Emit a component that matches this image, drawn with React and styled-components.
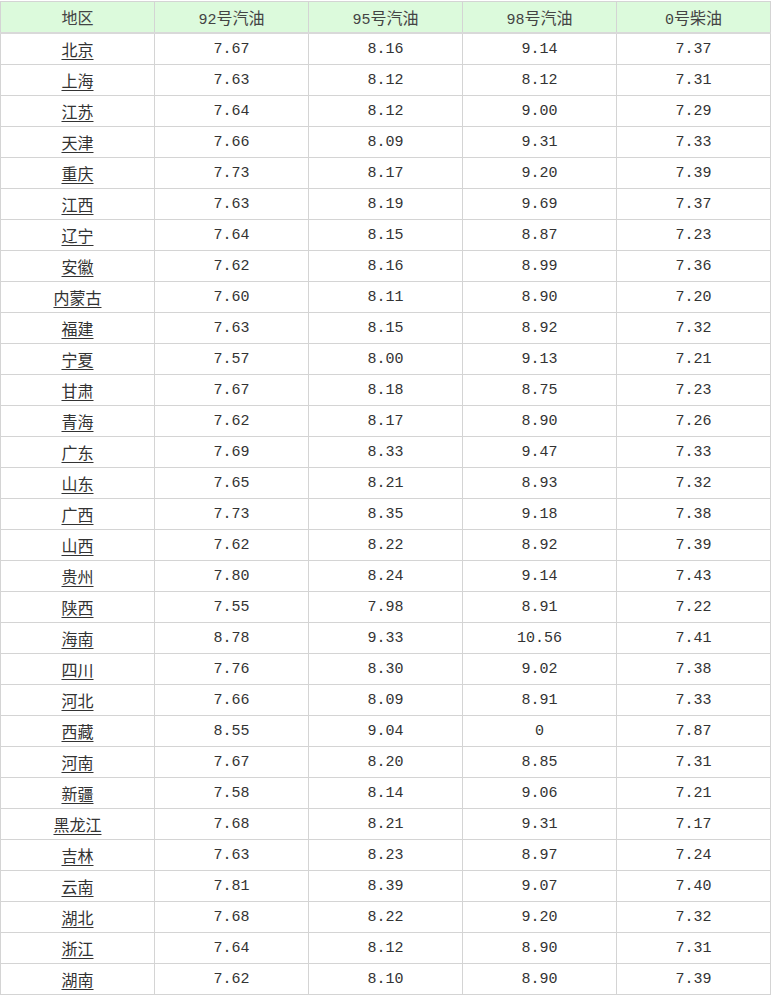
import React from 'react';
import styled, { createGlobalStyle } from 'styled-components';

const GlobalStyle = createGlobalStyle`
  body {
    margin: 0;
    padding: 1px 0 0 0;
    background: #fff;
  }
`;

const Table = styled.table`
  width: 771px;
  border-collapse: collapse;
  table-layout: fixed;
  font-family: "Liberation Serif", "Noto Sans CJK SC", serif;
  color: #333;
`;

const HeadCell = styled.th`
  height: 30px;
  padding: 0;
  background-color: #dcfadc;
  border: 1px solid #d4d4d4;
  border-bottom: 2px solid #d9d9d9;
  font-weight: normal;
  font-size: 16px;
  color: #444;
  text-align: center;
`;

const HeadNum = styled.span`
  font-family: "Liberation Mono", monospace;
  font-size: 15px;
`;

const Cell = styled.td`
  height: 30px;
  padding: 0;
  border: 1px solid #d4d4d4;
  text-align: center;
  font-size: ${props => (props.num ? '15px' : '16px')};
  font-family: ${props =>
    props.num ? '"Liberation Mono", monospace' : '"Noto Sans CJK SC", sans-serif'};
`;

const RegionLink = styled.a`
  color: #333;
  text-decoration: underline;
  text-underline-offset: 3px;
  font-family: "Noto Sans CJK SC", sans-serif;
  font-size: 16px;
`;

const headers = ['92', '95', '98', '0'];

const rows = [
  ['北京', '7.67', '8.16', '9.14', '7.37'],
  ['上海', '7.63', '8.12', '8.12', '7.31'],
  ['江苏', '7.64', '8.12', '9.00', '7.29'],
  ['天津', '7.66', '8.09', '9.31', '7.33'],
  ['重庆', '7.73', '8.17', '9.20', '7.39'],
  ['江西', '7.63', '8.19', '9.69', '7.37'],
  ['辽宁', '7.64', '8.15', '8.87', '7.23'],
  ['安徽', '7.62', '8.16', '8.99', '7.36'],
  ['内蒙古', '7.60', '8.11', '8.90', '7.20'],
  ['福建', '7.63', '8.15', '8.92', '7.32'],
  ['宁夏', '7.57', '8.00', '9.13', '7.21'],
  ['甘肃', '7.67', '8.18', '8.75', '7.23'],
  ['青海', '7.62', '8.17', '8.90', '7.26'],
  ['广东', '7.69', '8.33', '9.47', '7.33'],
  ['山东', '7.65', '8.21', '8.93', '7.32'],
  ['广西', '7.73', '8.35', '9.18', '7.38'],
  ['山西', '7.62', '8.22', '8.92', '7.39'],
  ['贵州', '7.80', '8.24', '9.14', '7.43'],
  ['陕西', '7.55', '7.98', '8.91', '7.22'],
  ['海南', '8.78', '9.33', '10.56', '7.41'],
  ['四川', '7.76', '8.30', '9.02', '7.38'],
  ['河北', '7.66', '8.09', '8.91', '7.33'],
  ['西藏', '8.55', '9.04', '0', '7.87'],
  ['河南', '7.67', '8.20', '8.85', '7.31'],
  ['新疆', '7.58', '8.14', '9.06', '7.21'],
  ['黑龙江', '7.68', '8.21', '9.31', '7.17'],
  ['吉林', '7.63', '8.23', '8.97', '7.24'],
  ['云南', '7.81', '8.39', '9.07', '7.40'],
  ['湖北', '7.68', '8.22', '9.20', '7.32'],
  ['浙江', '7.64', '8.12', '8.90', '7.31'],
  ['湖南', '7.62', '8.10', '8.90', '7.39'],
];

export default function App() {
  return (
    <>
      <GlobalStyle />
      <Table>
        <thead>
          <tr>
            <HeadCell>地区</HeadCell>
            {headers.map(h => (
              <HeadCell key={h}>
                <HeadNum>{h}</HeadNum>
                {h === '0' ? '号柴油' : '号汽油'}
              </HeadCell>
            ))}
          </tr>
        </thead>
        <tbody>
          {rows.map(([name, ...prices]) => (
            <tr key={name}>
              <Cell>
                <RegionLink href="#">{name}</RegionLink>
              </Cell>
              {prices.map((p, i) => (
                <Cell num key={i}>{p}</Cell>
              ))}
            </tr>
          ))}
        </tbody>
      </Table>
    </>
  );
}
